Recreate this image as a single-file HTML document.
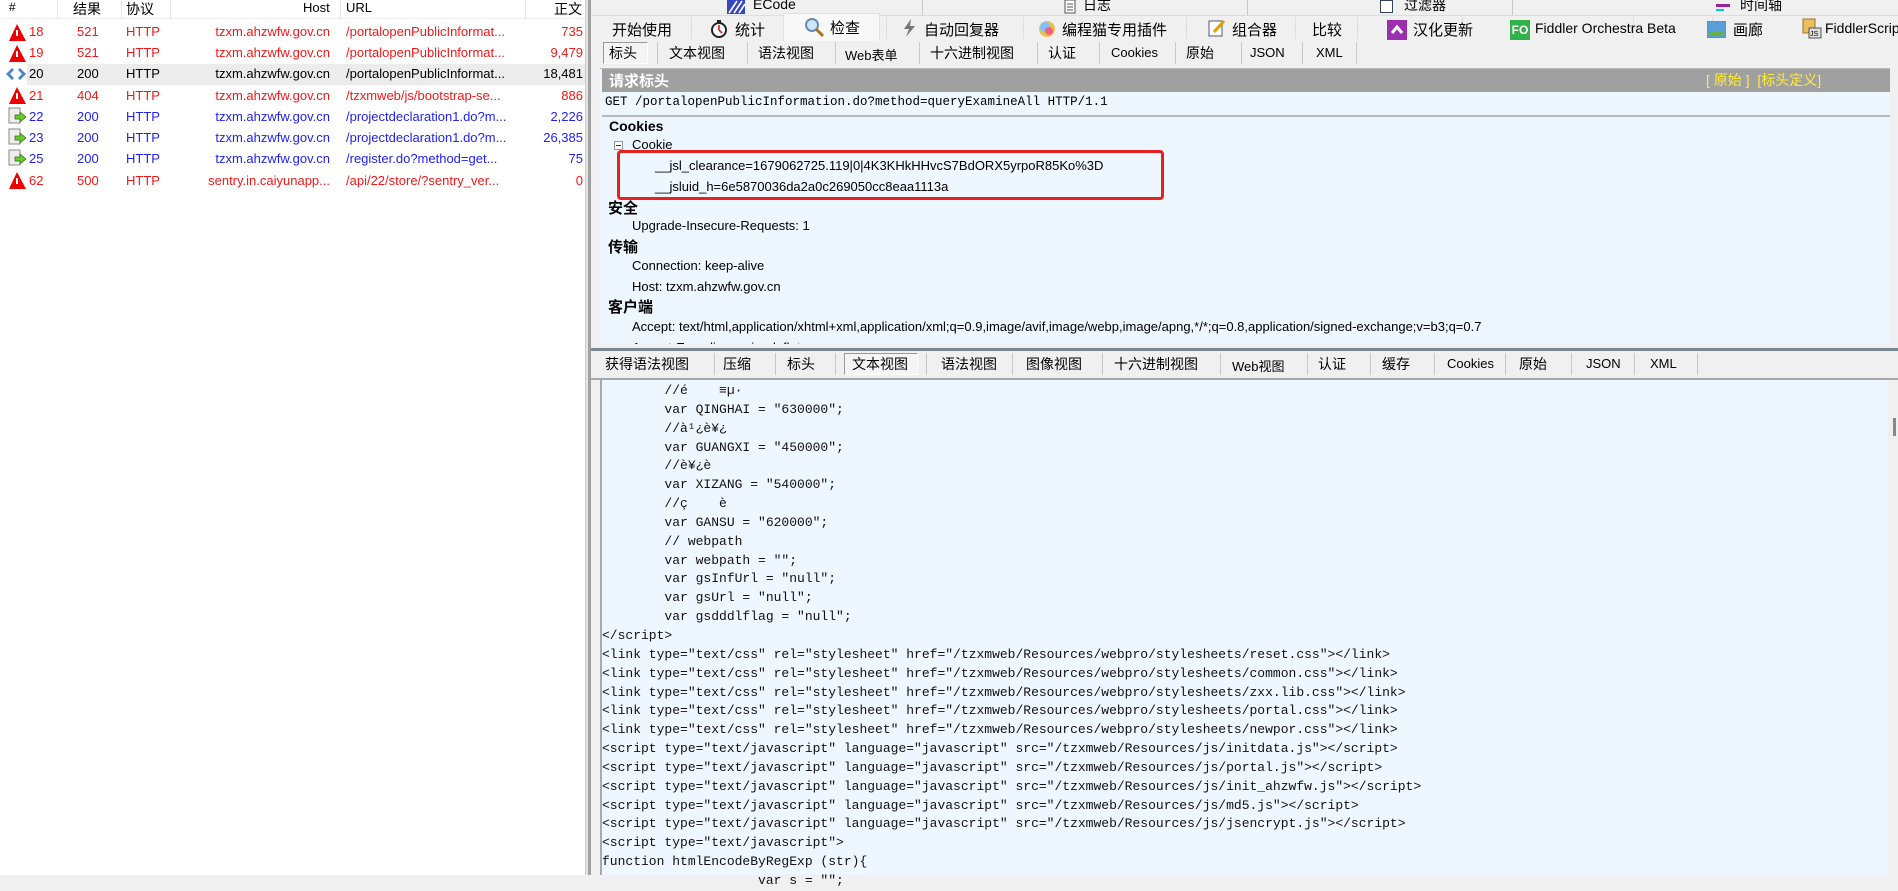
<!DOCTYPE html>
<html><head><meta charset="utf-8"><style>
*{margin:0;padding:0;box-sizing:border-box}
body{width:1898px;height:875px;overflow:hidden;background:#f0f0f0;position:relative;font-family:"Liberation Sans","Noto Sans CJK SC",sans-serif;font-size:13px;color:#000}
.a{position:absolute;white-space:nowrap}
.r{color:#f01818}.b{color:#2222ee}
.sep{position:absolute;width:1px;background:#c8c8c8}
.ui{font-size:14px}
.code{position:absolute;left:602px;font-family:"Liberation Mono",monospace;font-size:13px;letter-spacing:0;white-space:pre;color:#111}
</style></head><body>
<div class="a" style="left:0;top:0;width:587px;height:875px;background:#fff"></div>
<div class="a" style="left:0;top:0;width:587px;height:19px;background:#fff;border-bottom:1px solid #eee"></div>
<div class="sep" style="left:57px;top:0;height:19px;background:#e5e5e5"></div>
<div class="sep" style="left:121px;top:0;height:19px;background:#e5e5e5"></div>
<div class="sep" style="left:170px;top:0;height:19px;background:#e5e5e5"></div>
<div class="sep" style="left:340px;top:0;height:19px;background:#e5e5e5"></div>
<div class="sep" style="left:525px;top:0;height:19px;background:#e5e5e5"></div>
<span class="a" style="left:9px;top:0;font-size:12px">#</span>
<span class="a" style="left:73px;top:-1px;font-size:14px">结果</span>
<span class="a" style="left:126px;top:-1px;font-size:14px">协议</span>
<span class="a" style="left:303px;top:0">Host</span>
<span class="a" style="left:346px;top:0">URL</span>
<span class="a" style="left:554px;top:-1px;font-size:14px">正文</span>
<div class="a" style="left:27px;top:64px;width:558px;height:21px;background:#ececec"></div>
<div class="a" style="left:585px;top:0;width:5px;height:875px;background:#e4e4e4;border-left:1px solid #ccc"></div>
<div class="a" style="left:588px;top:0;width:3px;height:875px;background:#a0a0a0"></div>
<svg class="a" style="left:0;top:0" width="30" height="190">
<g fill="#e00"><path d="M17 24 L9 41 L26 41Z"/><path d="M17 45 L9 62 L26 62Z"/><path d="M17 87 L9 104 L26 104Z"/><path d="M17 172 L9 189 L26 189Z"/></g>
<g fill="#fff"><rect x="16" y="30" width="2" height="6"/><rect x="16" y="51" width="2" height="6"/><rect x="16" y="93" width="2" height="6"/><rect x="16" y="178" width="2" height="6"/></g>
<g fill="#4a86c8"><path d="M6 74 L12 68 L14 70 L10 74 L14 78 L12 80Z"/><path d="M26 74 L20 68 L18 70 L22 74 L18 78 L20 80Z"/></g>
<g><rect x="9" y="108" width="11" height="15" fill="#eee" stroke="#888"/><path d="M15 115h5v-3l6 5-6 5v-3h-5z" fill="#6c3" stroke="#360" stroke-width=".7"/>
<rect x="9" y="129" width="11" height="15" fill="#eee" stroke="#888"/><path d="M15 136h5v-3l6 5-6 5v-3h-5z" fill="#6c3" stroke="#360" stroke-width=".7"/>
<rect x="9" y="150" width="11" height="15" fill="#eee" stroke="#888"/><path d="M15 157h5v-3l6 5-6 5v-3h-5z" fill="#6c3" stroke="#360" stroke-width=".7"/></g>
</svg>
<div style="font-size:13px">
<span class="a r" style="left:29px;top:24px">18</span><span class="a r" style="left:77px;top:24px">521</span><span class="a r" style="left:126px;top:24px">HTTP</span><span class="a r" style="right:1568px;top:24px">tzxm.ahzwfw.gov.cn</span><span class="a r" style="left:346px;top:24px">/portalopenPublicInformat...</span><span class="a r" style="right:1315px;top:24px">735</span>
<span class="a r" style="left:29px;top:45px">19</span><span class="a r" style="left:77px;top:45px">521</span><span class="a r" style="left:126px;top:45px">HTTP</span><span class="a r" style="right:1568px;top:45px">tzxm.ahzwfw.gov.cn</span><span class="a r" style="left:346px;top:45px">/portalopenPublicInformat...</span><span class="a r" style="right:1315px;top:45px">9,479</span>
<span class="a" style="left:29px;top:66px">20</span><span class="a" style="left:77px;top:66px">200</span><span class="a" style="left:126px;top:66px">HTTP</span><span class="a" style="right:1568px;top:66px">tzxm.ahzwfw.gov.cn</span><span class="a" style="left:346px;top:66px">/portalopenPublicInformat...</span><span class="a" style="right:1315px;top:66px">18,481</span>
<span class="a r" style="left:29px;top:88px">21</span><span class="a r" style="left:77px;top:88px">404</span><span class="a r" style="left:126px;top:88px">HTTP</span><span class="a r" style="right:1568px;top:88px">tzxm.ahzwfw.gov.cn</span><span class="a r" style="left:346px;top:88px">/tzxmweb/js/bootstrap-se...</span><span class="a r" style="right:1315px;top:88px">886</span>
<span class="a b" style="left:29px;top:109px">22</span><span class="a b" style="left:77px;top:109px">200</span><span class="a b" style="left:126px;top:109px">HTTP</span><span class="a b" style="right:1568px;top:109px">tzxm.ahzwfw.gov.cn</span><span class="a b" style="left:346px;top:109px">/projectdeclaration1.do?m...</span><span class="a b" style="right:1315px;top:109px">2,226</span>
<span class="a b" style="left:29px;top:130px">23</span><span class="a b" style="left:77px;top:130px">200</span><span class="a b" style="left:126px;top:130px">HTTP</span><span class="a b" style="right:1568px;top:130px">tzxm.ahzwfw.gov.cn</span><span class="a b" style="left:346px;top:130px">/projectdeclaration1.do?m...</span><span class="a b" style="right:1315px;top:130px">26,385</span>
<span class="a b" style="left:29px;top:151px">25</span><span class="a b" style="left:77px;top:151px">200</span><span class="a b" style="left:126px;top:151px">HTTP</span><span class="a b" style="right:1568px;top:151px">tzxm.ahzwfw.gov.cn</span><span class="a b" style="left:346px;top:151px">/register.do?method=get...</span><span class="a b" style="right:1315px;top:151px">75</span>
<span class="a r" style="left:29px;top:173px">62</span><span class="a r" style="left:77px;top:173px">500</span><span class="a r" style="left:126px;top:173px">HTTP</span><span class="a r" style="right:1568px;top:173px">sentry.in.caiyunapp...</span><span class="a r" style="left:346px;top:173px">/api/22/store/?sentry_ver...</span><span class="a r" style="right:1315px;top:173px">0</span>
</div>

<div class="a" style="left:591px;top:15px;width:1307px;height:1px;background:#ddd"></div>
<div class="sep" style="left:922px;top:0;height:15px"></div><div class="sep" style="left:1247px;top:0;height:15px"></div><div class="sep" style="left:1512px;top:0;height:15px"></div>
<svg class="a" style="left:727px;top:0" width="18" height="14"><rect width="18" height="14" fill="#3548c0"/><path d="M2 13L10 1M7 13L15 1M12 13L18 4" stroke="#fff" stroke-width="1.6"/></svg>
<span class="a ui" style="left:753px;top:-4px">ECode</span>
<svg class="a" style="left:1064px;top:0" width="12" height="14"><rect x="1" y="0" width="10" height="13" fill="#fff" stroke="#555"/><path d="M3 4h6M3 7h6M3 10h6" stroke="#555"/></svg>
<span class="a ui" style="left:1083px;top:-5px">日志</span>
<div class="a" style="left:1380px;top:0;width:13px;height:13px;border:1px solid #345;background:#fff"></div>
<span class="a ui" style="left:1404px;top:-5px">过滤器</span>
<div class="a" style="left:1716px;top:4px;width:14px;height:3px;background:#a020a0"></div><div class="a" style="left:1716px;top:9px;width:8px;height:2px;background:#0cc"></div>
<span class="a ui" style="left:1740px;top:-5px">时间轴</span>

<div class="a" style="left:783px;top:13px;width:97px;height:28px;background:#f8f8f8;border:1px solid #e0e0e0;border-bottom:none"></div>
<div class="sep" style="left:691px;top:17px;height:22px;background:#ddd"></div>
<div class="sep" style="left:886px;top:17px;height:22px;background:#ddd"></div>
<div class="sep" style="left:1023px;top:17px;height:22px;background:#ddd"></div>
<div class="sep" style="left:1186px;top:17px;height:22px;background:#ddd"></div>
<div class="sep" style="left:1295px;top:17px;height:22px;background:#ddd"></div>
<div class="sep" style="left:1357px;top:17px;height:22px;background:#ddd"></div>
<div class="sep" style="left:1462px;top:17px;height:22px;background:#ddd"></div>
<div class="sep" style="left:1633px;top:17px;height:22px;background:#ddd"></div>
<div class="sep" style="left:1712px;top:17px;height:22px;background:#ddd"></div>
<span class="a ui" style="left:612px;top:19px;font-size:15px">开始使用</span>
<svg class="a" style="left:710px;top:20px" width="18" height="18"><circle cx="9" cy="10" r="7" fill="#fff" stroke="#222" stroke-width="2"/><path d="M9 10L9 5M9 10L12 13" stroke="#d00" stroke-width="1.5"/><rect x="7" y="0" width="4" height="3" fill="#222"/></svg>
<span class="a ui" style="left:735px;top:19px;font-size:15px">统计</span>
<svg class="a" style="left:803px;top:16px" width="22" height="22"><circle cx="9" cy="9" r="6" fill="#cfe6ff" stroke="#6a8ab0" stroke-width="2"/><path d="M13 13L20 20" stroke="#b07020" stroke-width="3"/></svg>
<span class="a ui" style="left:830px;top:17px;font-size:15px">检查</span>
<svg class="a" style="left:901px;top:19px" width="16" height="18"><path d="M10 0L3 10h5l-3 8 9-11H9z" fill="#777"/></svg>
<span class="a ui" style="left:924px;top:19px;font-size:15px">自动回复器</span>
<svg class="a" style="left:1038px;top:20px" width="18" height="18"><circle cx="9" cy="9" r="8" fill="#e8c050"/><circle cx="7" cy="7" r="5" fill="#80c0ff"/><circle cx="11" cy="11" r="4" fill="#f06080"/></svg>
<span class="a ui" style="left:1062px;top:19px;font-size:15px">编程猫专用插件</span>
<svg class="a" style="left:1208px;top:19px" width="18" height="18"><rect x="1" y="2" width="13" height="15" fill="#fff" stroke="#557"/><path d="M6 13L16 2" stroke="#e0a000" stroke-width="3"/></svg>
<span class="a ui" style="left:1232px;top:19px;font-size:15px">组合器</span>
<span class="a ui" style="left:1312px;top:19px;font-size:15px">比较</span>
<div class="a" style="left:1387px;top:20px;width:20px;height:20px;background:#9b2fae"></div><svg class="a" style="left:1387px;top:20px" width="20" height="20"><path d="M5 13L10 7L15 13" stroke="#fff" stroke-width="3" fill="none"/></svg>
<span class="a ui" style="left:1413px;top:19px;font-size:15px">汉化更新</span>
<div class="a" style="left:1510px;top:20px;width:20px;height:20px;background:#2fb24a;color:#fff;font-size:12px;font-weight:bold;line-height:20px;text-align:center">FO</div>
<span class="a ui" style="left:1535px;top:20px">Fiddler Orchestra Beta</span>
<svg class="a" style="left:1707px;top:21px" width="19" height="17"><rect x=".5" y=".5" width="18" height="16" fill="#5a9ed8" stroke="#888"/><rect x="2" y="10" width="15" height="5" fill="#6ab04a"/></svg>
<span class="a ui" style="left:1733px;top:19px;font-size:15px">画廊</span>
<svg class="a" style="left:1800px;top:17px" width="22" height="22"><path d="M3 2h12v14H3z" fill="#e8c060" stroke="#a07020"/><rect x="9" y="11" width="12" height="10" fill="#ddd" stroke="#555"/><text x="10" y="19" font-size="7" font-family="Liberation Sans">JS</text></svg>
<span class="a ui" style="left:1825px;top:20px">FiddlerScript</span>

<div class="a" style="left:603px;top:42px;width:45px;height:22px;border:1px solid #999;border-right-color:#fff;border-bottom-color:#fff;background:#f4f4f4"></div>
<div class="sep" style="left:657px;top:42px;height:22px"></div><div class="sep" style="left:747px;top:42px;height:22px"></div><div class="sep" style="left:835px;top:42px;height:22px"></div><div class="sep" style="left:919px;top:42px;height:22px"></div><div class="sep" style="left:1037px;top:42px;height:22px"></div><div class="sep" style="left:1099px;top:42px;height:22px"></div><div class="sep" style="left:1175px;top:42px;height:22px"></div><div class="sep" style="left:1241px;top:42px;height:22px"></div><div class="sep" style="left:1302px;top:42px;height:22px"></div><div class="sep" style="left:1356px;top:42px;height:22px"></div>
<span class="a ui" style="left:609px;top:43px">标头</span>
<span class="a ui" style="left:669px;top:43px">文本视图</span>
<span class="a ui" style="left:758px;top:43px">语法视图</span>
<span class="a" style="left:845px;top:45px">Web表单</span>
<span class="a ui" style="left:930px;top:43px">十六进制视图</span>
<span class="a ui" style="left:1048px;top:43px">认证</span>
<span class="a" style="left:1111px;top:45px">Cookies</span>
<span class="a ui" style="left:1186px;top:43px">原始</span>
<span class="a" style="left:1250px;top:45px">JSON</span>
<span class="a" style="left:1316px;top:45px">XML</span>

<div class="a" style="left:600px;top:68px;width:1290px;height:276px;background:#eef6ff;border-top:1px solid #bbb"></div>
<div class="a" style="left:602px;top:69px;width:1288px;height:23px;background:#a0a0a0"></div>
<span class="a" style="left:609px;top:70px;color:#fff;font-weight:bold;font-size:15px">请求标头</span>
<span class="a" style="left:1706px;top:70px;color:#ffee33;font-size:14px">[ 原始 ]&nbsp; [标头定义]</span>
<span class="a" style="left:605px;top:95px;font-family:'Liberation Mono',monospace;font-size:12.5px">GET /portalopenPublicInformation.do?method=queryExamineAll HTTP/1.1</span>
<div class="a" style="left:602px;top:115px;width:1288px;height:2px;background:#b8b8b8"></div>
<span class="a" style="left:609px;top:118px;font-weight:bold;font-size:14px">Cookies</span>
<div class="a" style="left:614px;top:141px;width:9px;height:9px;border:1px solid #999;background:#fff"></div><div class="a" style="left:616px;top:145px;width:5px;height:1px;background:#333"></div>
<span class="a" style="left:632px;top:137px">Cookie</span>
<span class="a" style="left:655px;top:158px">__jsl_clearance=1679062725.119|0|4K3KHkHHvcS7BdORX5yrpoR85Ko%3D</span>
<span class="a" style="left:655px;top:179px">__jsluid_h=6e5870036da2a0c269050cc8eaa1113a</span>
<div class="a" style="left:617px;top:150px;width:547px;height:50px;border:3px solid #e82020;border-radius:4px"></div>
<span class="a" style="left:608px;top:197px;font-weight:bold;font-size:15px">安全</span>
<span class="a" style="left:632px;top:218px">Upgrade-Insecure-Requests: 1</span>
<span class="a" style="left:608px;top:236px;font-weight:bold;font-size:15px">传输</span>
<span class="a" style="left:632px;top:258px">Connection: keep-alive</span>
<span class="a" style="left:632px;top:279px">Host: tzxm.ahzwfw.gov.cn</span>
<span class="a" style="left:608px;top:296px;font-weight:bold;font-size:15px">客户端</span>
<span class="a" style="left:632px;top:319px">Accept: text/html,application/xhtml+xml,application/xml;q=0.9,image/avif,image/webp,image/apng,*/*;q=0.8,application/signed-exchange;v=b3;q=0.7</span>
<div class="a" style="left:600px;top:338px;width:1290px;height:6px;overflow:hidden"><span class="a" style="left:32px;top:2px">Accept-Encoding: gzip, deflate</span></div>

<div class="a" style="left:591px;top:348px;width:1307px;height:3px;background:#7a8896"></div>
<div class="a" style="left:844px;top:353px;width:74px;height:22px;border:1px solid #999;border-right-color:#fff;border-bottom-color:#fff;background:#f4f4f4"></div>
<div class="sep" style="left:714px;top:353px;height:22px"></div><div class="sep" style="left:775px;top:353px;height:22px"></div><div class="sep" style="left:835px;top:353px;height:22px"></div><div class="sep" style="left:926px;top:353px;height:22px"></div><div class="sep" style="left:1012px;top:353px;height:22px"></div><div class="sep" style="left:1102px;top:353px;height:22px"></div><div class="sep" style="left:1220px;top:353px;height:22px"></div><div class="sep" style="left:1307px;top:353px;height:22px"></div><div class="sep" style="left:1370px;top:353px;height:22px"></div><div class="sep" style="left:1434px;top:353px;height:22px"></div><div class="sep" style="left:1505px;top:353px;height:22px"></div><div class="sep" style="left:1571px;top:353px;height:22px"></div><div class="sep" style="left:1634px;top:353px;height:22px"></div><div class="sep" style="left:1697px;top:353px;height:22px"></div>
<span class="a ui" style="left:605px;top:354px">获得语法视图</span>
<span class="a ui" style="left:723px;top:354px">压缩</span>
<span class="a ui" style="left:787px;top:354px">标头</span>
<span class="a ui" style="left:852px;top:354px">文本视图</span>
<span class="a ui" style="left:941px;top:354px">语法视图</span>
<span class="a ui" style="left:1026px;top:354px">图像视图</span>
<span class="a ui" style="left:1114px;top:354px">十六进制视图</span>
<span class="a" style="left:1232px;top:356px">Web视图</span>
<span class="a ui" style="left:1318px;top:354px">认证</span>
<span class="a ui" style="left:1382px;top:354px">缓存</span>
<span class="a" style="left:1447px;top:356px">Cookies</span>
<span class="a ui" style="left:1519px;top:354px">原始</span>
<span class="a" style="left:1586px;top:356px">JSON</span>
<span class="a" style="left:1650px;top:356px">XML</span>
<div class="a" style="left:591px;top:378px;width:1307px;height:2px;background:#a8a8a8"></div>
<div class="a" style="left:600px;top:380px;width:1288px;height:495px;background:#eef6ff;border-left:2px solid #aaa"></div>
<div class="a" style="left:1888px;top:380px;width:10px;height:495px;background:#f0f0f0"></div>
<div class="a" style="left:1893px;top:418px;width:3px;height:18px;background:#888"></div>
<div class="code" style="top:382px;line-height:18.84px">        //é    ≡µ·
        var QINGHAI = "630000";
        //à¹¿è¥¿
        var GUANGXI = "450000";
        //è¥¿è
        var XIZANG = "540000";
        //ç    è
        var GANSU = "620000";
        // webpath
        var webpath = "";
        var gsInfUrl = "null";
        var gsUrl = "null";
        var gsdddlflag = "null";
&lt;/script&gt;
&lt;link type="text/css" rel="stylesheet" href="/tzxmweb/Resources/webpro/stylesheets/reset.css"&gt;&lt;/link&gt;
&lt;link type="text/css" rel="stylesheet" href="/tzxmweb/Resources/webpro/stylesheets/common.css"&gt;&lt;/link&gt;
&lt;link type="text/css" rel="stylesheet" href="/tzxmweb/Resources/webpro/stylesheets/zxx.lib.css"&gt;&lt;/link&gt;
&lt;link type="text/css" rel="stylesheet" href="/tzxmweb/Resources/webpro/stylesheets/portal.css"&gt;&lt;/link&gt;
&lt;link type="text/css" rel="stylesheet" href="/tzxmweb/Resources/webpro/stylesheets/newpor.css"&gt;&lt;/link&gt;
&lt;script type="text/javascript" language="javascript" src="/tzxmweb/Resources/js/initdata.js"&gt;&lt;/script&gt;
&lt;script type="text/javascript" language="javascript" src="/tzxmweb/Resources/js/portal.js"&gt;&lt;/script&gt;
&lt;script type="text/javascript" language="javascript" src="/tzxmweb/Resources/js/init_ahzwfw.js"&gt;&lt;/script&gt;
&lt;script type="text/javascript" language="javascript" src="/tzxmweb/Resources/js/md5.js"&gt;&lt;/script&gt;
&lt;script type="text/javascript" language="javascript" src="/tzxmweb/Resources/js/jsencrypt.js"&gt;&lt;/script&gt;
&lt;script type="text/javascript"&gt;
function htmlEncodeByRegExp (str){
                    var s = "";</div>
</body></html>
